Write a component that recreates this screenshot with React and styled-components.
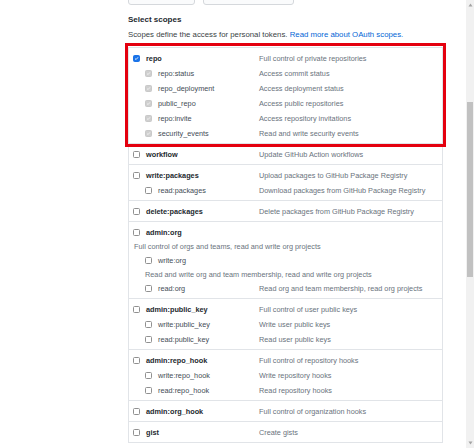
import React from 'react';
import styled, { createGlobalStyle } from 'styled-components';

const GlobalStyle = createGlobalStyle`
  html, body {
    margin: 0;
    padding: 0;
    background: #fff;
    font-family: "Liberation Sans", Arial, sans-serif;
  }
`;

const scopes = [
  {
    name: 'repo',
    desc: 'Full control of private repositories',
    checked: true,
    highlight: true,
    children: [
      { name: 'repo:status', desc: 'Access commit status' },
      { name: 'repo_deployment', desc: 'Access deployment status' },
      { name: 'public_repo', desc: 'Access public repositories' },
      { name: 'repo:invite', desc: 'Access repository invitations' },
      { name: 'security_events', desc: 'Read and write security events' }
    ]
  },
  { name: 'workflow', desc: 'Update GitHub Action workflows' },
  {
    name: 'write:packages',
    desc: 'Upload packages to GitHub Package Registry',
    children: [{ name: 'read:packages', desc: 'Download packages from GitHub Package Registry' }]
  },
  { name: 'delete:packages', desc: 'Delete packages from GitHub Package Registry' },
  {
    name: 'admin:org',
    note: 'Full control of orgs and teams, read and write org projects',
    children: [
      { name: 'write:org', note: 'Read and write org and team membership, read and write org projects' },
      { name: 'read:org', desc: 'Read org and team membership, read org projects' }
    ]
  },
  {
    name: 'admin:public_key',
    desc: 'Full control of user public keys',
    children: [
      { name: 'write:public_key', desc: 'Write user public keys' },
      { name: 'read:public_key', desc: 'Read user public keys' }
    ]
  },
  {
    name: 'admin:repo_hook',
    desc: 'Full control of repository hooks',
    children: [
      { name: 'write:repo_hook', desc: 'Write repository hooks' },
      { name: 'read:repo_hook', desc: 'Read repository hooks' }
    ]
  },
  { name: 'admin:org_hook', desc: 'Full control of organization hooks' },
  { name: 'gist', desc: 'Create gists' }
];

const Checkbox = ({ checked, disabled }) => (
  <Box checked={checked} disabled={disabled}>
    {checked && (
      <svg width="7" height="7" viewBox="0 0 7 7">
        <path d="M1.4 3.6 L2.9 5 L5.7 1.8" fill="none" stroke={disabled ? '#f4f4f4' : '#fff'} strokeWidth="1.2" />
      </svg>
    )}
  </Box>
);

export default function App() {
  return (
    <Page>
      <GlobalStyle />
      <Main>
        <TopButtons>
          <GhostButton w={67} />
          <GhostButton w={91} />
        </TopButtons>
        <Heading>Select scopes</Heading>
        <Intro>
          Scopes define the access for personal tokens. <Link href="#">Read more about OAuth scopes.</Link>
        </Intro>
        <ScopeList>
          {scopes.map((s) => (
            <Group key={s.name} highlight={s.highlight}>
              <Row>
                <LabelCell>
                  <Checkbox checked={s.checked} />
                  <Name>{s.name}</Name>
                </LabelCell>
                {s.desc && <Desc>{s.desc}</Desc>}
              </Row>
              {s.note && <Note>{s.note}</Note>}
              {(s.children || []).map((c) => (
                <React.Fragment key={c.name}>
                  <Row sub>
                    <LabelCell>
                      <Checkbox checked={s.checked} disabled={s.checked} />
                      <SubName>{c.name}</SubName>
                    </LabelCell>
                    {c.desc && <Desc>{c.desc}</Desc>}
                  </Row>
                  {c.note && <Note sub>{c.note}</Note>}
                </React.Fragment>
              ))}
            </Group>
          ))}
        </ScopeList>
      </Main>
      <Scrollbar>
        <Arrow>
          <svg width="5" height="4" viewBox="0 0 5 4"><path d="M2.5 0.5 L4.5 3.5 L0.5 3.5 Z" fill="#a3a3a3" /></svg>
        </Arrow>
        <Track>
          <Thumb />
        </Track>
        <Arrow>
          <svg width="5" height="4" viewBox="0 0 5 4"><path d="M0.5 0.5 L4.5 0.5 L2.5 3.5 Z" fill="#a3a3a3" /></svg>
        </Arrow>
      </Scrollbar>
    </Page>
  );
}

const Page = styled.div`
  display: flex;
  height: 448px;
  overflow: hidden;
`;

const Main = styled.div`
  flex: 1;
  padding: 0 23px 0 128px;
  color: #24292e;
`;

const TopButtons = styled.div`
  display: flex;
  gap: 8px;
  margin-top: -20px;
`;

const GhostButton = styled.div`
  width: ${(p) => p.w}px;
  height: 25px;
  box-sizing: border-box;
  border: 1px solid #d5d8dc;
  border-radius: 3px;
  background: #fafbfc;
`;

const Heading = styled.div`
  margin-top: 9px;
  font-size: 8px;
  font-weight: bold;
  line-height: 12px;
`;

const Intro = styled.div`
  margin-top: 3px;
  font-size: 7.8px;
  line-height: 12px;
  color: #3a3f44;
`;

const Link = styled.a`
  color: #0366d6;
  text-decoration: none;
`;

const ScopeList = styled.div`
  margin-top: 6px;
  border: 1px solid #e1e4e8;
  border-top: none;
`;

const Group = styled.div`
  border-top: 1px solid #e1e4e8;
  padding: 2.5px 4px;
  outline: ${(p) => (p.highlight ? '3px solid #e4000f' : 'none')};
  outline-offset: 1px;
  position: relative;
`;

const Row = styled.div`
  display: grid;
  grid-template-columns: ${(p) => (p.sub ? '114px' : '126px')} 1fr;
  padding-left: ${(p) => (p.sub ? '12px' : '0')};
  height: 15px;
  align-items: center;
  font-size: 7.3px;
`;

const LabelCell = styled.div`
  display: flex;
  align-items: center;
  gap: 6px;
`;

const Box = styled.span`
  width: 7px;
  height: 7px;
  box-sizing: border-box;
  border-radius: 1.5px;
  display: inline-flex;
  align-items: center;
  justify-content: center;
  border: 1px solid ${(p) => (p.checked ? (p.disabled ? '#c9c9c9' : '#1a73e8') : '#909090')};
  background: ${(p) => (p.checked ? (p.disabled ? '#cfcfcf' : '#1a73e8') : '#fff')};
  svg {
    display: block;
  }
`;

const Name = styled.span`
  font-weight: bold;
  color: #24292e;
`;

const SubName = styled.span`
  color: #444d56;
`;

const Desc = styled.span`
  color: #6a737d;
`;

const Note = styled.div`
  padding-left: ${(p) => (p.sub ? '12px' : '1px')};
  height: 13px;
  line-height: 13px;
  font-size: 7.3px;
  color: #6a737d;
`;

const Scrollbar = styled.div`
  width: 8px;
  display: flex;
  flex-direction: column;
  background: #f1f1f1;
`;

const Arrow = styled.div`
  height: 10px;
  display: flex;
  align-items: center;
  justify-content: center;
`;

const Track = styled.div`
  flex: 1;
  padding-top: 92px;
`;

const Thumb = styled.div`
  height: 175px;
  margin: 0 1px;
  background: #c1c1c1;
`;
